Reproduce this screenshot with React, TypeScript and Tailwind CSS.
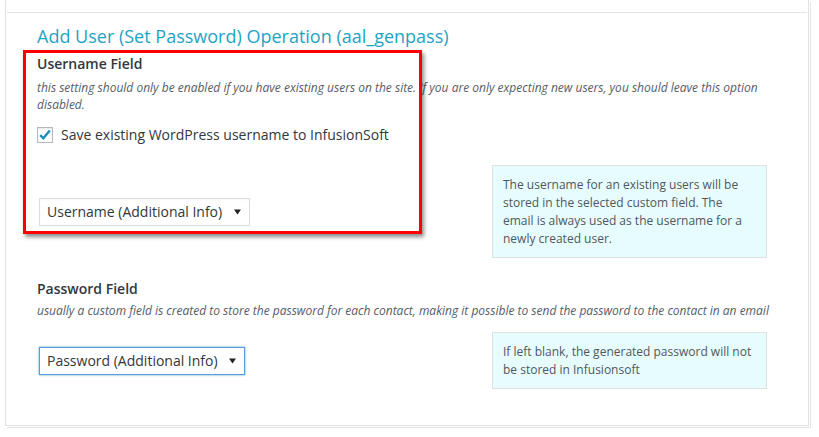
import React from "react";

const font = { fontFamily: '"Open Sans", "Liberation Sans", sans-serif' };

function Arrow() {
  return (
    <svg width="7" height="6" viewBox="0 0 7 6" className="shrink-0">
      <polygon points="0,0.5 7,0.5 3.5,5.5" fill="#222" />
    </svg>
  );
}

function Select({ label, width, focused }: { label: string; width: string; focused?: boolean }) {
  return (
    <div
      className={
        "ml-[2px] flex h-[28px] items-center justify-between bg-white pl-[7px] pr-[8px] text-[14px] text-[#32373c] " +
        width +
        (focused
          ? " border border-[#5b9dd9] shadow-[0_0_2px_rgba(30,140,190,0.8)]"
          : " border border-[#dddddd] shadow-[inset_0_1px_2px_rgba(0,0,0,0.04)]")
      }
    >
      <span className="leading-[20px]">{label}</span>
      <Arrow />
    </div>
  );
}

function Info({ children }: { children: React.ReactNode }) {
  return (
    <div className="w-[275px] border border-[#dde3e3] bg-[#e7fcfc] pb-[9px] pl-[10px] pr-[10px] pt-[10px] text-[12px] leading-[18px] text-[#50575e]">
      {children}
    </div>
  );
}

export default function App() {
  return (
    <div className="relative h-[437px] w-[819px] overflow-hidden bg-white" style={font}>
      <div className="ml-[5px] w-[804px] border-x border-b border-[#e2e2e2] bg-white pt-[12px] shadow-[0_0_0_1px_#fff,2px_2px_0_0_#e5e5e5]">
        <div className="mx-px border-t border-[#e5e5e5]" />
        <div className="pl-[31px] pr-[30px] pb-[36px]">
          <h2 className="mt-[11px] text-[18px] font-normal leading-[25px] text-[#1fa3c4]">
            Add User (Set Password) Operation (aal_genpass)
          </h2>
          <div className="mt-[5px] text-[14px] font-semibold leading-[20px] text-[#32373c]">Username Field</div>
          <p className="mt-[5px] text-[12px] italic leading-[17px] text-[#555d66]">
            this setting should only be enabled if you have existing users on the site. If you are only expecting new
            users, you should leave this option disabled.
          </p>
          <div className="mt-[12px] flex h-[20px] items-center">
            <div className="flex h-[16px] w-[16px] items-center justify-center border border-[#b4b9be] bg-white shadow-[inset_0_1px_2px_rgba(0,0,0,0.1)]">
              <svg width="14" height="14" viewBox="0 0 14 14">
                <path d="M2.2 7.2 L5.4 10.3 L11.8 2.6" fill="none" stroke="#1e8cbe" strokeWidth="2.4" />
              </svg>
            </div>
            <span className="ml-[8px] text-[14px] leading-[20px] text-[#32373c]">
              Save existing WordPress username to InfusionSoft
            </span>
          </div>
          <div className="mt-[20px] flex items-center">
            <div className="w-[455px]">
              <Select label="Username (Additional Info)" width="w-[211px]" />
            </div>
            <Info>
              The username for an existing users will be stored in the selected custom field. The email is always used
              as the username for a newly created user.
            </Info>
          </div>
          <div className="mt-[21px] text-[14px] font-semibold leading-[20px] text-[#32373c]">Password Field</div>
          <p className="mt-[3px] text-[12px] italic leading-[17px] text-[#555d66]">
            usually a custom field is created to store the password for each contact, making it possible to send the
            password to the contact in an email
          </p>
          <div className="mt-[13px] flex items-center">
            <div className="w-[455px]">
              <Select label="Password (Additional Info)" width="w-[206px]" focused />
            </div>
            <Info>If left blank, the generated password will not be stored in Infusionsoft</Info>
          </div>
        </div>
      </div>
      <div className="absolute left-[23px] top-[50px] h-[184px] w-[399px] border-[3px] border-[#ff0000] shadow-[2px_3px_4px_rgba(0,0,0,0.45)]" />
    </div>
  );
}
